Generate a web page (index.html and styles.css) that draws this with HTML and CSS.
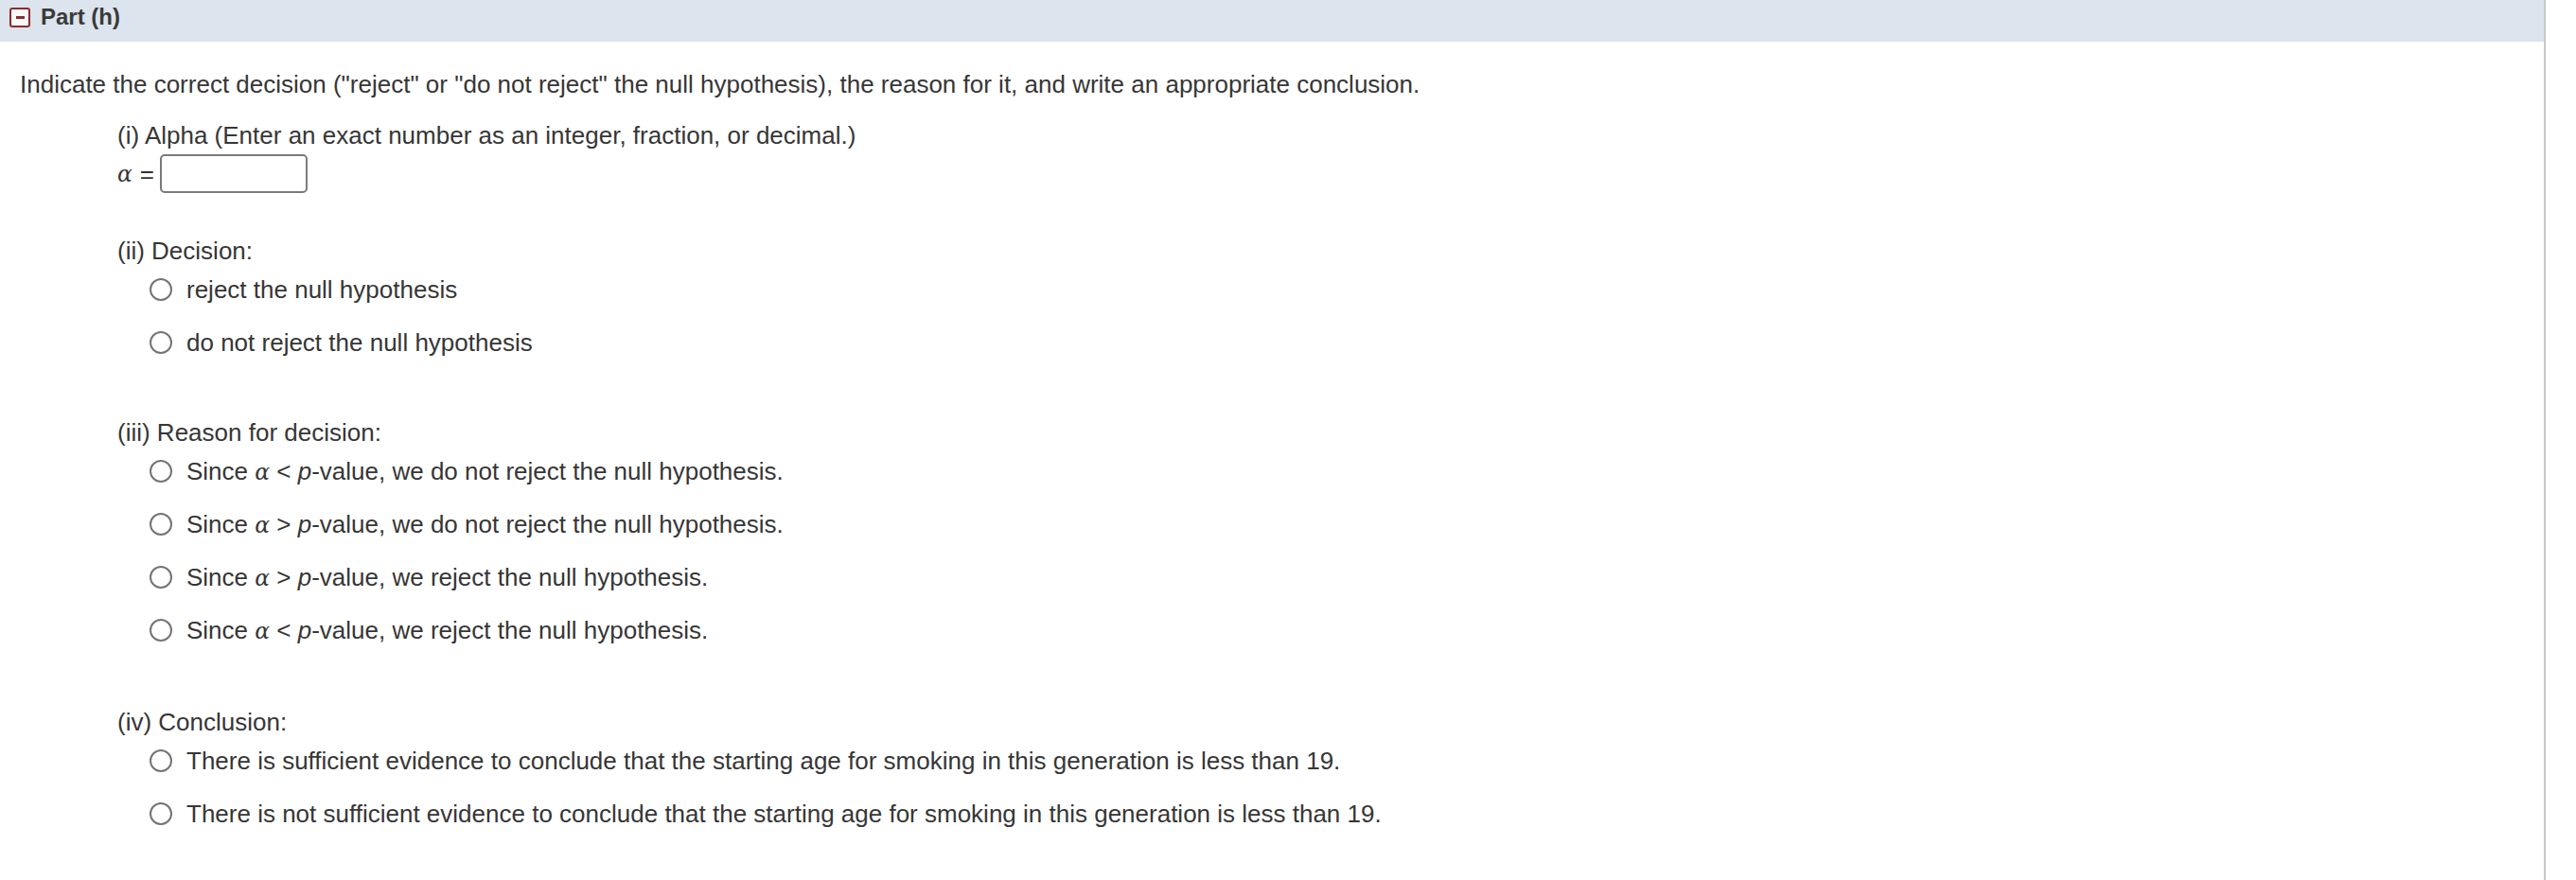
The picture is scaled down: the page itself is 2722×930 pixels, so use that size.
FILE: index.html
```html
<!DOCTYPE html>
<html lang="en">
<head>
    <meta charset="UTF-8">
    <title>Part (h)</title>
    <link rel="stylesheet" href="styles.css">
</head>
<body>
    <div class="panel">
        <div class="part-header">
            <span class="toggle"><span class="toggle-bar"></span></span>
            <span class="part-title">Part (h)</span>
        </div>

        <div class="part-body">
            <p class="intro">Indicate the correct decision ("reject" or "do not reject" the null hypothesis), the reason for it, and write an appropriate conclusion.</p>

            <div class="step step-alpha">
                <div class="prompt">(i) Alpha (Enter an exact number as an integer, fraction, or decimal.)</div>
                <div class="answer-row">
                    <span class="math">α</span><span class="eq">=</span>
                    <input type="text" class="answer-box">
                </div>
            </div>

            <div class="step step-decision">
                <div class="prompt">(ii) Decision:</div>
                <div class="choices">
                    <label class="choice"><input type="radio" name="decision"><span>reject the null hypothesis</span></label>
                    <label class="choice"><input type="radio" name="decision"><span>do not reject the null hypothesis</span></label>
                </div>
            </div>

            <div class="step">
                <div class="prompt">(iii) Reason for decision:</div>
                <div class="choices">
                    <label class="choice"><input type="radio" name="reason"><span>Since <i class="math">α</i> &lt; <i>p</i>-value, we do not reject the null hypothesis.</span></label>
                    <label class="choice"><input type="radio" name="reason"><span>Since <i class="math">α</i> &gt; <i>p</i>-value, we do not reject the null hypothesis.</span></label>
                    <label class="choice"><input type="radio" name="reason"><span>Since <i class="math">α</i> &gt; <i>p</i>-value, we reject the null hypothesis.</span></label>
                    <label class="choice"><input type="radio" name="reason"><span>Since <i class="math">α</i> &lt; <i>p</i>-value, we reject the null hypothesis.</span></label>
                </div>
            </div>

            <div class="step step-conclusion">
                <div class="prompt">(iv) Conclusion:</div>
                <div class="choices">
                    <label class="choice"><input type="radio" name="conclusion"><span>There is sufficient evidence to conclude that the starting age for smoking in this generation is less than 19.</span></label>
                    <label class="choice"><input type="radio" name="conclusion"><span>There is not sufficient evidence to conclude that the starting age for smoking in this generation is less than 19.</span></label>
                </div>
            </div>
        </div>
    </div>
</body>
</html>
```

FILE: styles.css
```css
body {
    margin: 0;
    font-family: "Liberation Sans", Arial, sans-serif;
    color: #363636;
    background-color: white;
}
.panel {
    width: 2688px;
    min-height: 930px;
    border-right: 2px solid #c8c8c8;
}
.part-header {
    height: 44px;
    background-color: #dce4ed;
    display: flex;
    align-items: center;
    padding-left: 10px;
    gap: 11px;
}
.toggle {
    width: 22px;
    height: 21px;
    box-sizing: border-box;
    border: 2px solid #8e2c2c;
    border-radius: 3px;
    background-color: #fbf8f8;
    display: flex;
    align-items: center;
    justify-content: center;
    margin-top: -8px;
}
.toggle-bar {
    width: 9px;
    height: 3px;
    background-color: #8e2c2c;
}
.part-title {
    font-weight: bold;
    font-size: 24px;
    color: #3a3a3a;
    margin-top: -8px;
}
.part-body {
    padding-left: 21px;
    font-size: 26px;
    line-height: 30px;
}
.intro {
    margin: 30px 0 0;
}
.step {
    margin-left: 103px;
    margin-top: 65px;
}
.step-alpha {
    margin-top: 24px;
}
.step-decision {
    margin-top: 46px;
}
.step-conclusion {
    margin-top: 67px;
}
.answer-row {
    display: flex;
    align-items: center;
    margin-top: 5px;
}
.math {
    font-family: "DejaVu Serif", "Liberation Serif", serif;
    font-style: italic;
    font-size: 0.9em;
}
.eq {
    margin: 0 6px 0 8px;
}
.answer-box {
    width: 156px;
    height: 41px;
    box-sizing: border-box;
    border: 2px solid #7a7a7a;
    border-radius: 5px;
    margin: 0;
}
.choices {
    display: flex;
    flex-direction: column;
    gap: 26px;
    margin-top: 11px;
    padding-left: 34px;
}
.choice {
    display: flex;
    align-items: center;
    height: 30px;
}
.choice input {
    appearance: none;
    width: 24px;
    height: 24px;
    margin: 0 15px 0 0;
    border: 2px solid #747474;
    border-radius: 50%;
    background-color: white;
}
```
